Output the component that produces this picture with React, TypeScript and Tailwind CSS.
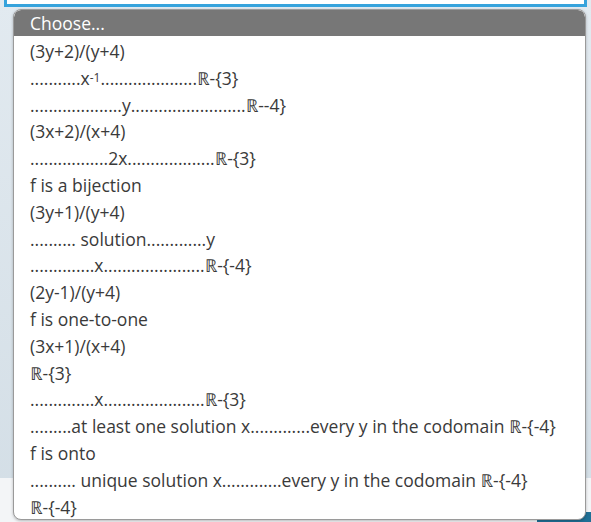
import React from "react";

const options: string[] = [
  "(3y+2)/(y+4)",
  "__x1",
  "....................y.........................ℝ--4}",
  "(3x+2)/(x+4)",
  ".................2x...................ℝ-{3}",
  "f is a bijection",
  "(3y+1)/(y+4)",
  ".......... solution.............y",
  "..............x......................ℝ-{-4}",
  "(2y-1)/(y+4)",
  "f is one-to-one",
  "(3x+1)/(x+4)",
  "ℝ-{3}",
  "..............x......................ℝ-{3}",
  ".........at least one solution x.............every y in the codomain ℝ-{-4}",
  "f is onto",
  ".......... unique solution x.............every y in the codomain ℝ-{-4}",
  "ℝ-{-4}",
];

function Option({ text }: { text: string }) {
  if (text === "__x1") {
    return (
      <li className="h-[26.8px] leading-[26.8px] px-[16px] whitespace-nowrap">
        ...........x<sup className="text-[12px] -top-[3px]">-1</sup>.....................ℝ-{"{3}"}
      </li>
    );
  }
  return <li className="h-[26.8px] leading-[26.8px] px-[16px] whitespace-nowrap">{text}</li>;
}

export default function App() {
  return (
    <div
      className="relative flex flex-col w-[591px] h-[522px] overflow-hidden bg-gradient-to-b from-[#e2eaf0] to-[#d3dee6]"
      style={{ fontFamily: '"Open Sans", "Noto Sans", sans-serif' }}
    >
      {/* select box behind the list */}
      <div className="h-[7px] mx-[4px] border-x-[3px] border-b-[3px] border-[#36a3dc] bg-white" />
      <div className="flex-1" />
      <div className="flex h-[44px] bg-[#f3f5f7] items-end justify-end">
        <div className="w-[54px] h-[10px] bg-[#1f6f95]" />
      </div>

      {/* open option list, lying over the page */}
      <div className="absolute left-[13px] top-[9px] w-[573px] h-[511px] flex flex-col rounded-[8px] border border-[#9a9a9a] bg-white overflow-hidden shadow-[0_1px_3px_rgba(0,0,0,0.25)]">
        <div className="h-[26px] leading-[26px] bg-[#777777] text-white text-[17.5px] px-[16px] rounded-t-[7px]">
          Choose...
        </div>
        <ul className="flex flex-col text-[17.5px] text-[#3a3a3a] pt-[2px]">
          {options.map((o, i) => (
            <Option key={i} text={o} />
          ))}
        </ul>
      </div>
    </div>
  );
}
